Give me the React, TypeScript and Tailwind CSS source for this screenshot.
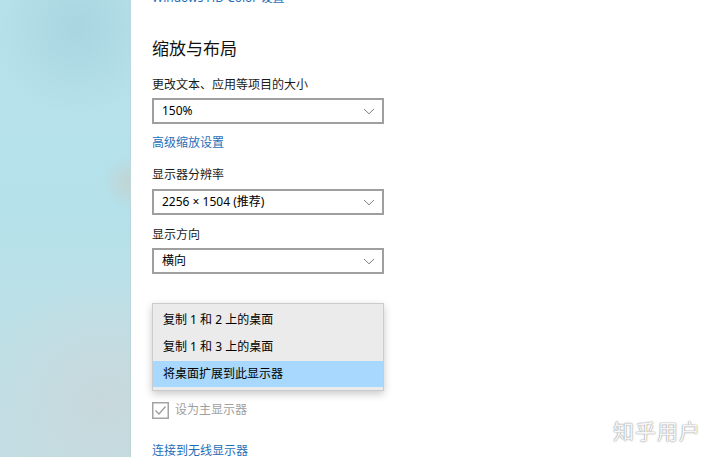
import { ReactNode } from "react";

const font = "[font-family:'Noto_Sans','Noto_Sans_CJK_SC',sans-serif]";

function Chevron() {
  return (
    <svg width="12" height="7" viewBox="0 0 12 7" className="mr-[2px] shrink-0">
      <path d="M1 1 L6 5.8 L11 1" fill="none" stroke="#808080" strokeWidth="1" />
    </svg>
  );
}

function Select({ value }: { value: string }) {
  return (
    <div className="flex h-[26px] w-[232px] items-center justify-between border-2 border-[#9f9f9f] bg-white pl-[8px] pr-[5px] text-[12px] text-black">
      <span>{value}</span>
      <Chevron />
    </div>
  );
}

function Label({ children, className = "" }: { children: ReactNode; className?: string }) {
  return <div className={`h-[20px] text-[12px] leading-[20px] text-[#1a1a1a] ${className}`}>{children}</div>;
}

function Link({ children, className = "" }: { children: ReactNode; className?: string }) {
  return <div className={`h-[20px] text-[12px] leading-[20px] text-[#1f6fb8] ${className}`}>{children}</div>;
}

const items = ["复制 1 和 2 上的桌面", "复制 1 和 3 上的桌面", "将桌面扩展到此显示器"];

export default function App() {
  return (
    <div className={`relative flex h-[457px] w-[720px] overflow-hidden bg-white ${font}`}>
      {/* blurred wallpaper strip on the left */}
      <div className="w-[131px] shrink-0 border-r border-[#bcd6dc] bg-[radial-gradient(circle_at_60%_6%,#a8d5e0_0,transparent_20%),radial-gradient(circle_at_100%_40%,#c2d3d3_0,transparent_9%),radial-gradient(circle_at_80%_88%,#c8d8dc_0,transparent_30%),linear-gradient(180deg,#b8e2eb_0%,#b4e1ea_45%,#bde0e7_70%,#c2dee4_100%)]" />

      <div className="flex flex-1 flex-col pl-[21px]">
        <Link className="mt-[-12px]">Windows HD Color 设置</Link>

        <div className="mt-[29px] h-[24px] text-[17px] leading-[24px] text-[#111]">缩放与布局</div>

        <Label className="mt-[14px]">更改文本、应用等项目的大小</Label>
        <div className="mt-[3px]">
          <Select value="150%" />
        </div>

        <Link className="mt-[9px]">高级缩放设置</Link>

        <Label className="mt-[12px]">显示器分辨率</Label>
        <div className="mt-[4px]">
          <Select value="2256 × 1504 (推荐)" />
        </div>

        <Label className="mt-[10px]">显示方向</Label>
        <div className="mt-[3px]">
          <Select value="横向" />
        </div>

        <div className="mt-[29px] w-[232px] border border-[#cbcbcb] bg-[#ebebeb] py-[3px] shadow-[0_3px_8px_rgba(0,0,0,0.22)]">
          {items.map((t, i) => (
            <div
              key={t}
              className={`flex h-[26px] items-center pl-[10px] text-[12px] text-black ${
                i === 2 ? "bg-[#a8d8fd]" : ""
              } ${i > 0 ? "mt-[1px]" : ""}`}
            >
              {t}
            </div>
          ))}
        </div>

        <div className="mt-[10px] flex h-[18px] items-center gap-[6px]">
          <svg width="17" height="17" viewBox="0 0 17 17">
            <rect x="0.75" y="0.75" width="15.5" height="15.5" fill="white" stroke="#a3a3a3" strokeWidth="1.5" />
            <path d="M3.5 8.5 L7 12 L13.5 4.5" fill="none" stroke="#9c9c9c" strokeWidth="1.3" />
          </svg>
          <span className="text-[12px] text-[#a0a0a0]">设为主显示器</span>
        </div>

        <Link className="mt-[22px]">连接到无线显示器</Link>
      </div>

      <div className="absolute left-[613px] top-[418px] text-[21px] leading-[26px] tracking-[1px] text-[#f6f6f6] [text-shadow:0_0_1px_#8a8a8a,0_0_2px_#b0b0b0]">
        知乎用户
      </div>
    </div>
  );
}
